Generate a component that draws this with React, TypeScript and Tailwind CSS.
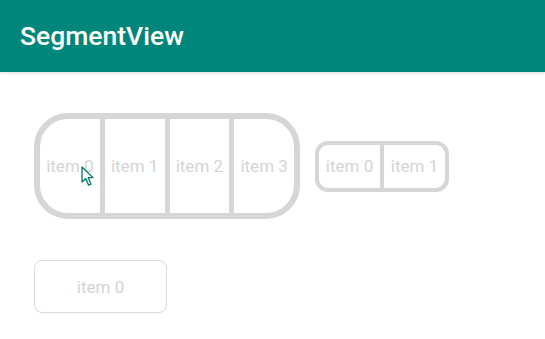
import React from 'react';

const font = { fontFamily: 'Roboto, "Liberation Sans", sans-serif' };

function Segment({
    items,
    outer,
    divider,
    cell,
}: {
    items: string[];
    outer: string;
    divider: string;
    cell: string;
}) {
    return (
        <div className={`flex bg-white ${outer}`}>
            {items.map((label, i) => (
                <React.Fragment key={label}>
                    {i > 0 && <div className={`shrink-0 bg-[#d6d6d6] ${divider}`} />}
                    <div className={`flex items-center justify-center pt-[2px] text-[17px] text-[#d4d4d4] ${cell}`}>
                        {label}
                    </div>
                </React.Fragment>
            ))}
        </div>
    );
}

export default function App() {
    return (
        <div className="h-[339px] w-[545px] overflow-hidden bg-white" style={font}>
            {/* Toolbar */}
            <div className="flex h-[72px] items-center bg-[#00867a] pl-5 shadow-[0_1px_3px_rgba(0,0,0,0.15)]">
                <h1 className="text-[26.5px] font-medium text-white">SegmentView</h1>
            </div>

            <div className="flex flex-col gap-[41px] pl-[34px] pt-[41px]">
                <div className="flex items-center gap-[15px]">
                    <div className="relative">
                        <Segment
                            items={['item 0', 'item 1', 'item 2', 'item 3']}
                            outer="h-[106px] w-[266px] rounded-[34px] border-[6px] border-[#d6d6d6] overflow-hidden"
                            divider="w-[5px]"
                            cell="flex-1"
                        />
                        {/* mouse pointer */}
                        <svg
                            className="absolute left-[47px] top-[53px]"
                            width="14"
                            height="21"
                            viewBox="0 0 14 21"
                        >
                            <path
                                d="M1 1 L1 16 L4.8 12.6 L7.6 19.2 L10 18.2 L7.2 11.6 L12 11.6 Z"
                                fill="white"
                                stroke="#00796b"
                                strokeWidth="1.3"
                                strokeLinejoin="round"
                            />
                        </svg>
                    </div>
                    <Segment
                        items={['item 0', 'item 1']}
                        outer="h-[51px] w-[134px] rounded-[13px] border-4 border-[#d6d6d6] overflow-hidden"
                        divider="w-[4px]"
                        cell="flex-1"
                    />
                </div>

                <Segment
                    items={['item 0']}
                    outer="h-[53px] w-[133px] rounded-[8px] border border-[#d9d9d9] overflow-hidden"
                    divider="w-px"
                    cell="flex-1"
                />
            </div>
        </div>
    );
}
